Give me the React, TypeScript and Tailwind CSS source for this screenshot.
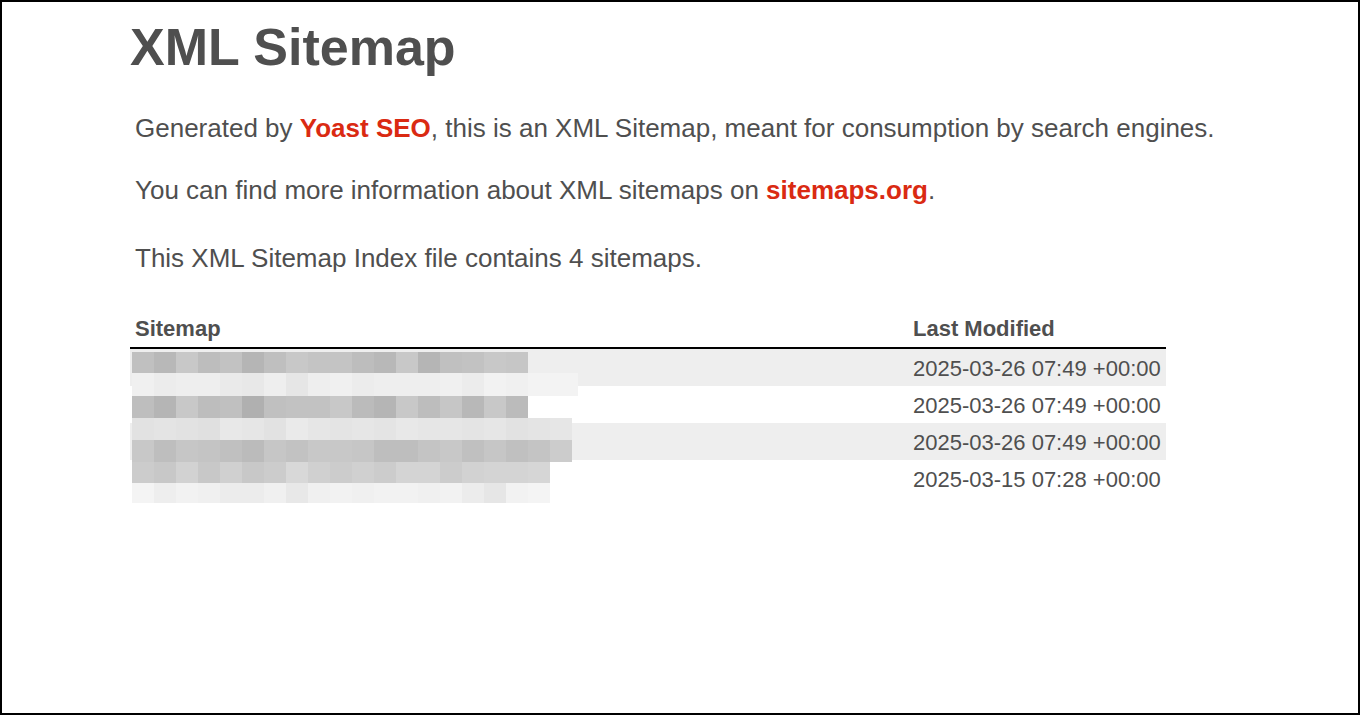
import React from "react";

const mosaicRows: { y: number; h: number; c: string[] }[] = [
  { y: 0, h: 21, c: ["c0", "b8", "c8", "bd", "c2", "b5", "bf", "c8", "c4", "c4", "bd", "b8", "c8", "b5", "c0", "c2", "c8", "c6"] },
  { y: 21, h: 23, c: ["f0", "ec", "ee", "ee", "ea", "e8", "ee", "e6", "ee", "f0", "ec", "ee", "ee", "ee", "f0", "ec", "f2", "f0", "f3", "f3"] },
  { y: 44, h: 22, c: ["be", "b5", "c8", "bd", "c0", "b0", "c0", "c2", "c2", "c8", "bb", "b5", "c8", "bd", "c6", "b8", "c8", "bb"] },
  { y: 66, h: 22, c: ["e2", "e4", "e2", "e0", "e8", "e6", "e2", "ea", "e6", "e4", "e6", "e4", "e8", "e6", "e6", "e4", "e6", "e2", "e4", "e6"] },
  { y: 88, h: 22, c: ["c8", "be", "c6", "c4", "c0", "bb", "c6", "c2", "c8", "c8", "c6", "be", "be", "c4", "c8", "c0", "c6", "c0", "c4", "cc"] },
  { y: 110, h: 21, c: ["cc", "c8", "d2", "c8", "d0", "c8", "cc", "d8", "d0", "cc", "d0", "cc", "d4", "d4", "cc", "d2", "d4", "d4", "d6"] },
  { y: 131, h: 20, c: ["f4", "ee", "f2", "f0", "ec", "ec", "f0", "e8", "f0", "f2", "f0", "f2", "f2", "f0", "f2", "ec", "e6", "f2", "f4"] },
];

function Mosaic() {
  return (
    <svg width="450" height="151" viewBox="0 0 450 151" className="block">
      <rect x={0} y={21} width={446} height={23} fill="#f3f3f3" />
      {mosaicRows.map((r, ri) =>
        r.c.map((g, ci) => (
          <rect key={ri + "-" + ci} x={ci * 22} y={r.y} width={22} height={r.h} fill={"#" + g + g.slice(0, 2) + g.slice(0, 2)} />
        ))
      )}
    </svg>
  );
}

const dates = [
  "2025-03-26 07:49 +00:00",
  "2025-03-26 07:49 +00:00",
  "2025-03-26 07:49 +00:00",
  "2025-03-15 07:28 +00:00",
];

export default function App() {
  return (
    <div className="box-border h-[715px] w-full overflow-hidden border-2 border-black bg-white pl-[128px] font-['Liberation_Sans',Arial,Helvetica,sans-serif] text-[#4f4f4f]">
      <h1 className="mt-[19px] text-[52px] font-bold leading-[52px]">XML Sitemap</h1>
      <p className="mt-[40px] pl-[5px] text-[26px] leading-[31px]">
        Generated by <span className="font-bold text-[#da2a12]">Yoast SEO</span>, this is an XML Sitemap, meant for
        consumption by search engines.
      </p>
      <p className="mt-[31px] pl-[5px] text-[26px] leading-[31px]">
        You can find more information about XML sitemaps on{" "}
        <span className="font-bold text-[#da2a12]">sitemaps.org</span>.
      </p>
      <p className="mt-[37px] pl-[5px] text-[26px] leading-[31px]">
        This XML Sitemap Index file contains 4 sitemaps.
      </p>
      <div className="relative mt-[41px] w-[1036px] text-[22px]">
        <div className="flex border-b-2 border-black pb-[6px] pt-[1px] font-bold leading-[25px]">
          <div className="w-[783px] pl-[5px]">Sitemap</div>
          <div>Last Modified</div>
        </div>
        {dates.map((d, i) => (
          <div key={i} className={"flex h-[37px] items-center pt-[1px] leading-[25px] " + (i % 2 === 0 ? "bg-[#eeeeee]" : "bg-white")}>
            <div className="w-[783px]" />
            <div>{d}</div>
          </div>
        ))}
        <div className="absolute left-[2px] top-[37px]">
          <Mosaic />
        </div>
      </div>
    </div>
  );
}
